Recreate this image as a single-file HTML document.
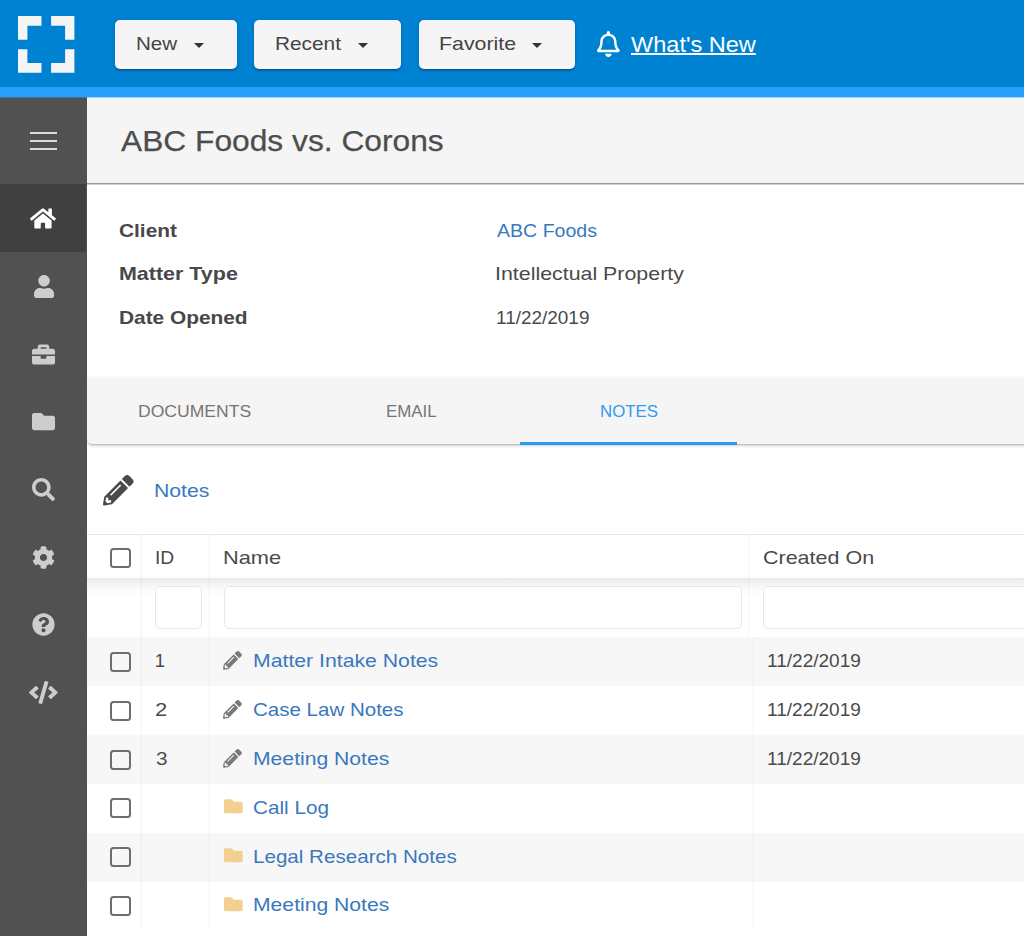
<!DOCTYPE html>
<html lang="en">
<head>
<meta charset="utf-8">
<title>ABC Foods vs. Corons</title>
<style>
*{box-sizing:border-box;margin:0;padding:0}
html,body{width:1024px;height:936px;overflow:hidden;background:#fff}
body{font-family:"Liberation Sans",sans-serif;color:#4a4a4a;position:relative}
.abs{position:absolute}
.t{position:absolute;white-space:nowrap;line-height:1;transform-origin:0 0}
#topbar{left:0;top:0;width:1024px;height:87px;background:#0082d3}
#band{left:0;top:87px;width:1024px;height:11px;background:#28a0f9}
#side{left:0;top:98px;width:87px;height:838px;background:#515151}
#sideact{left:0;top:184px;width:86px;height:68px;background:#404040}
#titlebar{left:87px;top:98px;width:937px;height:85px;background:#f5f5f5}
#mix1{left:0;top:97px;width:87px;height:1px;background:rgba(81,81,81,.6)}
#mix2{left:87px;top:97px;width:937px;height:1px;background:rgba(245,245,245,.6)}
#titleline{left:87px;top:183px;width:937px;height:2px;background:linear-gradient(#9a9a9a 0,#9a9a9a 50%,rgba(154,154,154,.45) 50%,rgba(154,154,154,.45) 100%)}
.btn{position:absolute;top:20px;height:49.4px;background:#f5f5f5;border-radius:5px;box-shadow:0 3px 1px -2px rgba(0,0,0,.2),0 2px 2px 0 rgba(0,0,0,.14),0 1px 5px 0 rgba(0,0,0,.12)}
.caret{position:absolute;top:42.5px;width:0;height:0;border-left:5.3px solid transparent;border-right:5.3px solid transparent;border-top:5.3px solid #333}
.ham{position:absolute;left:30px;width:27.4px;background:#dcdcdc}
#tabs{left:87px;top:378px;width:945px;height:66px;background:#f5f5f5;border-radius:5px;box-shadow:0 3px 1px -2px rgba(0,0,0,.13),0 2px 2px 0 rgba(0,0,0,.09),0 1px 5px 0 rgba(0,0,0,.12)}
#tabline{left:520px;top:442px;width:217px;height:2.6px;background:#2b9cf3}
#gridtop{left:87px;top:534px;width:937px;height:1px;background:#e6e6e6}
#hshadow{left:87px;top:578.3px;width:937px;height:18px;background:linear-gradient(#e9e9e9 0%,#f1f1f1 25%,#f8f8f8 50%,#fcfcfc 75%,#fff 100%)}
.cb{position:absolute;left:110.3px;width:20.3px;height:20px;border:2.1px solid #6e6e6e;border-radius:3.5px}
.row{position:absolute;left:87px;width:937px;height:48.9px;background:#fff}
.odd{background:#f7f7f7}
.vline{position:absolute;width:1px;background:rgba(0,0,0,.04)}
.inp{position:absolute;top:586px;height:43px;border:1px solid #e7e7e7;border-radius:5px;background:#fff}
svg{position:absolute;overflow:visible}
a{color:inherit}
</style>
</head>
<body>
<div id="topbar" class="abs"></div>
<div id="band" class="abs"></div>
<div id="tabs" class="abs"></div>
<div id="side" class="abs"></div>
<div id="sideact" class="abs"></div>
<div id="titlebar" class="abs"></div>
<div id="titleline" class="abs"></div>
<div id="mix1" class="abs"></div>
<div id="mix2" class="abs"></div>

<svg id="logo" style="left:17.8px;top:16.05px" width="56.4" height="56.75" viewBox="0 0 56.4 56.75"><g fill="#f5f5f5">
<path d="M0 0H23.45V9.75H9.4V23.85H0Z"/><path d="M56.4 0H33.1V9.75H47.1V23.85H56.4Z"/><path d="M0 56.75H23.45V47.05H9.4V33.2H0Z"/><path d="M56.4 56.75H33.1V47.05H47.1V33.2H56.4Z"/></g></svg>

<div class="btn" id="b1" style="left:114.7px;width:122px"></div>
<div class="btn" id="b2" style="left:253.8px;width:147.2px"></div>
<div class="btn" id="b3" style="left:418.7px;width:156.5px"></div>
<span class="t" id="tNew" style="left:135.63px;top:35px;font-size:18.5px;transform:scaleX(1.1127);color:#444">New</span>
<span class="t" id="tRecent" style="left:275.11px;top:35px;font-size:18.5px;transform:scaleX(1.1246);color:#444">Recent</span>
<span class="t" id="tFav" style="left:439.17px;top:35px;font-size:18.5px;transform:scaleX(1.1535);color:#444">Favorite</span>
<div class="caret" style="left:193.7px"></div>
<div class="caret" style="left:357.9px"></div>
<div class="caret" style="left:532px"></div>
<svg id="bell" style="left:597.02px;top:31.45px" width="22.75" height="26.00" viewBox="0 0 448 512"><path fill="#ffffff" d="M439.39 362.29c-19.32-20.76-55.47-51.99-55.470-154.290 0-77.700-54.480-139.900-127.940-155.160V32c0-17.670-14.320-32-31.980-32s-31.980 14.330-31.980 32v20.840C118.560 68.100 64.080 130.300 64.080 208c0 102.300-36.150 133.530-55.470 154.290-6 6.450-8.660 14.160-8.610 21.710.11 16.400 12.980 32 32.100 32h383.800c19.120 0 32-15.600 32.100-32 .05-7.550-2.610-15.270-8.610-21.710zM67.530 368c21.220-27.970 44.420-74.330 44.530-159.420 0-.2-.06-.38-.06-.58 0-61.860 50.140-112 112-112s112 50.140 112 112c0 .2-.06.38-.06.58.11 85.100 23.310 131.460 44.530 159.420H67.530zM224 512c35.320 0 63.970-28.650 63.970-64H160.030c0 35.350 28.650 64 63.970 64z"/></svg>
<span class="t" id="tWhats" style="left:630.53px;top:35px;font-size:21.5px;transform:scaleX(1.0945);color:#fff;text-decoration:underline;text-decoration-thickness:1.8px;text-underline-offset:1.4px">What's New</span>

<div class="ham" style="top:131.5px;height:2.4px"></div>
<div class="ham" style="top:139.5px;height:2.9px"></div>
<div class="ham" style="top:147.8px;height:2.3px"></div>
<svg style="left:30.06px;top:207.45px" width="25.88" height="23.00" viewBox="0 0 576 512"><path fill="#ffffff" d="M280.37 148.26L96 300.11V464a16 16 0 0 0 16 16l112.06-.29a16 16 0 0 0 15.92-16V368a16 16 0 0 1 16-16h64a16 16 0 0 1 16 16v95.64a16 16 0 0 0 16 16.05L464 480a16 16 0 0 0 16-16V300L295.67 148.26a12.19 12.19 0 0 0-15.3 0zM571.6 251.47L488 182.56V44.05a12 12 0 0 0-12-12h-56a12 12 0 0 0-12 12v72.61L318.47 43a48 48 0 0 0-61 0L4.34 251.47a12 12 0 0 0-1.6 16.9l25.5 31A12 12 0 0 0 45.15 301l235.22-193.74a12.19 12.19 0 0 1 15.3 0L530.9 301a12 12 0 0 0 16.9-1.6l25.5-31a12 12 0 0 0-1.7-16.93z"/></svg>
<svg style="left:33.74px;top:274.85px" width="20.12" height="23.00" viewBox="0 0 448 512"><path fill="#cdcdcd" d="M224 256c70.7 0 128-57.3 128-128S294.7 0 224 0 96 57.3 96 128s57.3 128 128 128zm89.6 32h-16.7c-22.2 10.2-46.9 16-72.9 16s-50.6-5.8-72.9-16h-16.7C60.2 288 0 348.2 0 422.4V464c0 26.5 21.5 48 48 48h352c26.5 0 48-21.5 48-48v-41.6c0-74.2-60.2-134.4-134.4-134.4z"/></svg>
<svg style="left:32.00px;top:342.85px" width="23.00" height="23.00" viewBox="0 0 512 512"><path fill="#cdcdcd" d="M320 336c0 8.84-7.16 16-16 16h-96c-8.84 0-16-7.16-16-16v-48H0v144c0 25.6 22.4 48 48 48h416c25.6 0 48-22.4 48-48V288H320v48zm144-208h-80V80c0-25.6-22.4-48-48-48H176c-25.6 0-48 22.4-48 48v48H48c-25.6 0-48 22.4-48 48v80h512v-80c0-25.6-22.4-48-48-48zm-144 0H192V96h128v32z"/></svg>
<svg style="left:32.00px;top:409.85px" width="23.00" height="23.00" viewBox="0 0 512 512"><path fill="#cdcdcd" d="M464 128H272l-64-64H48C21.49 64 0 85.49 0 112v288c0 26.51 21.49 48 48 48h416c26.51 0 48-21.49 48-48V176c0-26.51-21.49-48-48-48z"/></svg>
<svg style="left:32.00px;top:477.95px" width="23.00" height="23.00" viewBox="0 0 512 512"><path fill="#cdcdcd" d="M505 442.7L405.3 343c-4.5-4.5-10.6-7-17-7H372c27.6-35.3 44-79.7 44-128C416 93.1 322.9 0 208 0S0 93.1 0 208s93.1 208 208 208c48.3 0 92.7-16.4 128-44v16.3c0 6.4 2.5 12.5 7 17l99.7 99.7c9.4 9.4 24.6 9.4 33.9 0l28.3-28.3c9.4-9.4 9.4-24.6.1-34zM208 336c-70.7 0-128-57.2-128-128 0-70.7 57.2-128 128-128 70.7 0 128 57.2 128 128 0 70.7-57.2 128-128 128z"/></svg>
<svg style="left:32.00px;top:545.65px" width="23.00" height="23.00" viewBox="0 0 512 512"><path fill="#cdcdcd" d="M487.4 315.7l-42.6-24.6c4.3-23.2 4.3-47 0-70.2l42.6-24.6c4.9-2.8 7.1-8.6 5.5-14-11.1-35.6-30-67.8-54.7-94.600-3.800-4.100-10-5.100-14.800-2.300L380.800 110c-17.900-15.400-38.500-27.300-60.800-35.100V25.800c0-5.600-3.900-10.500-9.400-11.700-36.700-8.200-74.300-7.800-109.200 0-5.500 1.200-9.400 6.100-9.400 11.700V75c-22.200 7.900-42.800 19.800-60.800 35.100L88.700 85.500c-4.900-2.800-11-1.900-14.800 2.300-24.700 26.700-43.600 58.900-54.700 94.600-1.700 5.400.6 11.200 5.500 14L67.300 221c-4.300 23.200-4.300 47 0 70.200l-42.600 24.600c-4.900 2.800-7.100 8.600-5.500 14 11.100 35.600 30 67.800 54.700 94.600 3.800 4.100 10 5.100 14.800 2.300l42.600-24.600c17.900 15.400 38.500 27.300 60.800 35.100v49.200c0 5.600 3.900 10.500 9.400 11.700 36.700 8.200 74.300 7.800 109.200 0 5.500-1.200 9.400-6.100 9.400-11.700v-49.200c22.200-7.900 42.800-19.800 60.800-35.100l42.600 24.600c4.900 2.800 11 1.900 14.800-2.300 24.700-26.700 43.600-58.900 54.700-94.600 1.500-5.500-.7-11.300-5.600-14.100zM256 336c-44.100 0-80-35.900-80-80s35.900-80 80-80 80 35.900 80 80-35.900 80-80 80z"/></svg>
<svg style="left:32.00px;top:613.35px" width="23.00" height="23.00" viewBox="0 0 512 512"><path fill="#cdcdcd" d="M504 256c0 136.997-111.043 248-248 248S8 392.997 8 256C8 119.083 119.043 8 256 8s248 111.083 248 248zM262.655 90c-54.497 0-89.255 22.957-116.549 63.758-3.536 5.286-2.353 12.415 2.715 16.258l34.699 26.310c5.205 3.947 12.621 3.008 16.665-2.122 17.864-22.658 30.113-35.797 57.303-35.797 20.429 0 45.698 13.148 45.698 32.958 0 14.976-12.363 22.667-32.534 33.976C247.128 238.528 216 254.941 216 296v4c0 6.627 5.373 12 12 12h56c6.627 0 12-5.373 12-12v-1.333c0-28.462 83.186-29.647 83.186-106.667 0-58.002-60.165-102-116.531-102zM256 338c-25.365 0-46 20.635-46 46 0 25.364 20.635 46 46 46s46-20.636 46-46c0-25.365-20.635-46-46-46z"/></svg>
<svg style="left:29.12px;top:681.05px" width="28.75" height="23.00" viewBox="0 0 640 512"><path fill="#cdcdcd" d="M278.9 511.5l-61-17.7c-6.4-1.800-10-8.500-8.200-14.900L346.200 8.700c1.800-6.400 8.500-10 14.900-8.200l61 17.700c6.400 1.800 10 8.500 8.200 14.900L293.800 503.300c-1.900 6.400-8.500 10.100-14.900 8.200zm-114-112.200l43.500-46.400c4.600-4.900 4.300-12.700-.8-17.200L117 256l90.600-79.700c5.100-4.500 5.500-12.300.8-17.200l-43.500-46.400c-4.500-4.800-12.100-5.100-17-.5L3.800 247.200c-5.100 4.700-5.100 12.800 0 17.500l144.100 135.100c4.900 4.600 12.500 4.400 17-.5zm327.200.6l144.100-135.100c5.100-4.700 5.100-12.800 0-17.500L492.100 112.100c-4.800-4.500-12.400-4.300-17 .5L431.600 159c-4.600 4.900-4.300 12.700.8 17.200L523 256l-90.600 79.700c-5.100 4.500-5.500 12.300-.8 17.200l43.500 46.400c4.500 4.900 12.100 5.100 17 .6z"/></svg>

<span class="t" id="tTitle" style="left:120.5px;top:126px;font-size:30px;transform:scaleX(1.0576);color:#4d4d4d;-webkit-text-stroke:0.25px #4d4d4d">ABC Foods vs. Corons</span>
<span class="t" id="lClient" style="left:119.15px;top:222px;font-size:18.5px;transform:scaleX(1.1267);color:#484848;font-weight:bold">Client</span>
<span class="t" id="lMatter" style="left:118.55px;top:265px;font-size:18.5px;transform:scaleX(1.1597);color:#484848;font-weight:bold">Matter Type</span>
<span class="t" id="lDate" style="left:118.59px;top:309px;font-size:18.5px;transform:scaleX(1.1266);color:#484848;font-weight:bold">Date Opened</span>
<span class="t" id="vClient" style="left:496.55px;top:222px;font-size:18.5px;transform:scaleX(1.0569);color:#3a78bc">ABC Foods</span>
<span class="t" id="vMatter" style="left:495.18px;top:265px;font-size:18.5px;transform:scaleX(1.1552);color:#4a4a4a">Intellectual Property</span>
<span class="t" id="vDate" style="left:495.66px;top:309px;font-size:18.5px;transform:scaleX(1.0242);color:#4a4a4a">11/22/2019</span>

<div id="tabline" class="abs"></div>
<span class="t" id="tabDoc" style="left:138.33px;top:404px;font-size:16px;transform:scaleX(1.098);color:#757575">DOCUMENTS</span>
<span class="t" id="tabEmail" style="left:386.18px;top:404px;font-size:16px;transform:scaleX(1.0551);color:#757575">EMAIL</span>
<span class="t" id="tabNotes" style="left:599.59px;top:404px;font-size:16px;transform:scaleX(1.05);color:#2f9bf0">NOTES</span>

<svg id="bigpencil" style="left:102.60px;top:475.00px" width="30.60" height="30.60" viewBox="0 0 512 512"><path fill="#4a4a4a" d="M497.9 142.100l-46.100 46.100c-4.700 4.700-12.300 4.700-17 0l-111-111c-4.700-4.700-4.700-12.300 0-17l46.100-46.100c18.700-18.700 49.100-18.700 67.900 0l60.100 60.100c18.800 18.700 18.800 49.100 0 67.900zM284.200 99.800L21.600 362.400.4 483.900c-2.900 16.400 11.400 30.600 27.800 27.800l121.500-21.300 262.600-262.600c4.700-4.700 4.700-12.300 0-17l-111-111c-4.800-4.700-12.400-4.700-17.100 0zM124.100 339.900c-5.500-5.500-5.500-14.300 0-19.800l154-154c5.500-5.500 14.300-5.500 19.800 0s5.500 14.300 0 19.800l-154 154c-5.500 5.500-14.300 5.500-19.800 0zM88 424h48v36.300l-64.500 11.300-31.100-31.100L51.700 376H88v48z"/></svg>
<span class="t" id="hNotes" style="left:154.33px;top:482px;font-size:18.5px;transform:scaleX(1.1459);color:#3a78bc">Notes</span>

<div id="gridtop" class="abs"></div>
<div class="row odd" style="top:636.90px;height:48.95px"></div>
<div class="cb" style="top:651.60px"></div>
<div class="row" style="top:685.85px;height:48.95px"></div>
<div class="cb" style="top:700.55px"></div>
<div class="row odd" style="top:734.80px;height:48.95px"></div>
<div class="cb" style="top:749.50px"></div>
<div class="row" style="top:783.75px;height:48.95px"></div>
<div class="cb" style="top:798.45px"></div>
<div class="row odd" style="top:832.70px;height:48.95px"></div>
<div class="cb" style="top:847.40px"></div>
<div class="row" style="top:881.65px;height:47.35px"></div>
<div class="cb" style="top:896.35px"></div>
<div id="hshadow" class="abs"></div>
<div class="vline" style="left:141px;top:535px;height:394px"></div>
<div class="vline" style="left:209px;top:535px;height:394px"></div>
<div class="vline" style="left:748px;top:535px;height:101.9px"></div>
<div class="vline" style="left:753px;top:637px;height:292.1px"></div>
<div class="cb" style="top:548.4px"></div>
<span class="t" id="hID" style="left:155.28px;top:549px;font-size:18.5px;transform:scaleX(1.0413);color:#4a4a4a">ID</span>
<span class="t" id="hName" style="left:223.03px;top:549px;font-size:18.5px;transform:scaleX(1.1787);color:#4a4a4a">Name</span>
<span class="t" id="hCreated" style="left:762.54px;top:549px;font-size:18.5px;transform:scaleX(1.1615);color:#4a4a4a">Created On</span>
<div class="inp" style="left:155.4px;width:46.6px"></div>
<div class="inp" style="left:223.8px;width:517.8px"></div>
<div class="inp" style="left:763.2px;width:280px"></div>
<svg style="left:223.30px;top:650.90px" width="18.80" height="18.80" viewBox="0 0 512 512"><path fill="#7a7875" d="M497.9 142.100l-46.100 46.100c-4.700 4.700-12.300 4.700-17 0l-111-111c-4.700-4.700-4.700-12.300 0-17l46.100-46.100c18.700-18.700 49.100-18.700 67.900 0l60.100 60.100c18.800 18.700 18.800 49.100 0 67.900zM284.200 99.800L21.600 362.400.4 483.900c-2.900 16.400 11.400 30.600 27.800 27.800l121.500-21.300 262.600-262.600c4.700-4.700 4.700-12.300 0-17l-111-111c-4.800-4.700-12.400-4.700-17.100 0zM124.100 339.900c-5.500-5.500-5.500-14.300 0-19.800l154-154c5.500-5.500 14.300-5.500 19.800 0s5.500 14.300 0 19.800l-154 154c-5.500 5.500-14.300 5.500-19.800 0zM88 424h48v36.300l-64.500 11.300-31.100-31.100L51.700 376H88v48z"/></svg>
<svg style="left:223.30px;top:699.85px" width="18.80" height="18.80" viewBox="0 0 512 512"><path fill="#7a7875" d="M497.9 142.100l-46.100 46.100c-4.700 4.700-12.300 4.700-17 0l-111-111c-4.700-4.700-4.700-12.300 0-17l46.100-46.100c18.700-18.700 49.100-18.700 67.900 0l60.100 60.100c18.800 18.700 18.800 49.100 0 67.900zM284.200 99.800L21.600 362.400.4 483.900c-2.900 16.400 11.400 30.600 27.800 27.800l121.500-21.300 262.600-262.600c4.700-4.700 4.700-12.300 0-17l-111-111c-4.800-4.700-12.400-4.700-17.100 0zM124.100 339.900c-5.500-5.500-5.500-14.300 0-19.800l154-154c5.500-5.500 14.300-5.500 19.800 0s5.500 14.300 0 19.800l-154 154c-5.500 5.500-14.300 5.500-19.800 0zM88 424h48v36.300l-64.500 11.300-31.100-31.100L51.700 376H88v48z"/></svg>
<svg style="left:223.30px;top:748.80px" width="18.80" height="18.80" viewBox="0 0 512 512"><path fill="#7a7875" d="M497.9 142.100l-46.100 46.100c-4.700 4.700-12.300 4.700-17 0l-111-111c-4.700-4.700-4.700-12.300 0-17l46.100-46.100c18.700-18.700 49.100-18.700 67.900 0l60.100 60.100c18.800 18.700 18.800 49.100 0 67.900zM284.200 99.800L21.600 362.400.4 483.900c-2.900 16.400 11.400 30.600 27.800 27.800l121.500-21.300 262.600-262.600c4.700-4.700 4.700-12.300 0-17l-111-111c-4.800-4.700-12.400-4.700-17.100 0zM124.100 339.900c-5.500-5.500-5.500-14.300 0-19.800l154-154c5.500-5.500 14.300-5.500 19.800 0s5.500 14.300 0 19.800l-154 154c-5.500 5.500-14.300 5.500-19.800 0zM88 424h48v36.300l-64.500 11.300-31.100-31.100L51.700 376H88v48z"/></svg>
<svg style="left:223.60px;top:797.40px" width="18.70" height="18.70" viewBox="0 0 512 512"><path fill="#f3d08f" d="M464 128H272l-64-64H48C21.49 64 0 85.49 0 112v288c0 26.51 21.49 48 48 48h416c26.51 0 48-21.49 48-48V176c0-26.51-21.49-48-48-48z"/></svg>
<svg style="left:223.60px;top:846.35px" width="18.70" height="18.70" viewBox="0 0 512 512"><path fill="#f3d08f" d="M464 128H272l-64-64H48C21.49 64 0 85.49 0 112v288c0 26.51 21.49 48 48 48h416c26.51 0 48-21.49 48-48V176c0-26.51-21.49-48-48-48z"/></svg>
<svg style="left:223.60px;top:895.30px" width="18.70" height="18.70" viewBox="0 0 512 512"><path fill="#f3d08f" d="M464 128H272l-64-64H48C21.49 64 0 85.49 0 112v288c0 26.51 21.49 48 48 48h416c26.51 0 48-21.49 48-48V176c0-26.51-21.49-48-48-48z"/></svg>
<span class="t" id="r1id" style="left:154.8px;top:652px;font-size:18.5px;transform:scaleX(1.0);color:#4a4a4a">1</span>
<span class="t" id="r2id" style="left:155.31px;top:701px;font-size:18.5px;transform:scaleX(1.1879);color:#4a4a4a">2</span>
<span class="t" id="r3id" style="left:155.66px;top:750px;font-size:18.5px;transform:scaleX(1.12);color:#4a4a4a">3</span>
<span class="t" id="r1n" style="left:252.58px;top:652px;font-size:18.5px;transform:scaleX(1.1473);color:#3a78bc">Matter Intake Notes</span>
<span class="t" id="r2n" style="left:253.19px;top:701px;font-size:18.5px;transform:scaleX(1.109);color:#3a78bc">Case Law Notes</span>
<span class="t" id="r3n" style="left:252.59px;top:750px;font-size:18.5px;transform:scaleX(1.1429);color:#3a78bc">Meeting Notes</span>
<span class="t" id="r4n" style="left:253.18px;top:799px;font-size:18.5px;transform:scaleX(1.1194);color:#3a78bc">Call Log</span>
<span class="t" id="r5n" style="left:252.63px;top:848px;font-size:18.5px;transform:scaleX(1.1133);color:#3a78bc">Legal Research Notes</span>
<span class="t" id="r6n" style="left:252.59px;top:896px;font-size:18.5px;transform:scaleX(1.1429);color:#3a78bc">Meeting Notes</span>
<span class="t" id="r1d" style="left:766.76px;top:652px;font-size:18.5px;transform:scaleX(1.0287);color:#4a4a4a">11/22/2019</span>
<span class="t" id="r2d" style="left:766.76px;top:701px;font-size:18.5px;transform:scaleX(1.0287);color:#4a4a4a">11/22/2019</span>
<span class="t" id="r3d" style="left:766.76px;top:750px;font-size:18.5px;transform:scaleX(1.0287);color:#4a4a4a">11/22/2019</span>
</body>
</html>
